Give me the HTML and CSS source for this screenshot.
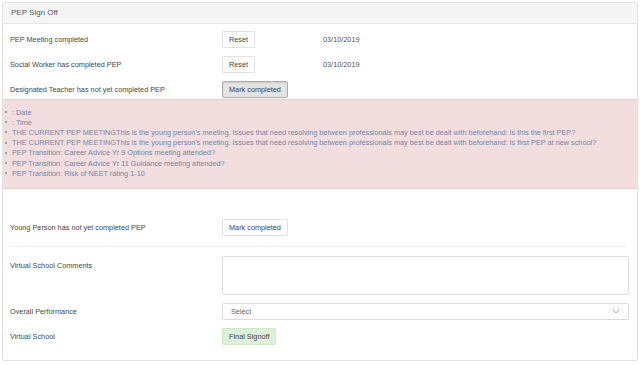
FILE: index.html
```html
<!DOCTYPE html>
<html lang="en">
<head>
  <meta charset="UTF-8" />
  <title>PEP Sign Off</title>
  <link rel="stylesheet" href="styles.css">
</head>
<body>

  <div class="panel">
    <div class="panel-heading">PEP Sign Off</div>

    <div class="panel-body">
      <div class="row">
        <div class="label">PEP Meeting completed</div>
        <div class="control"><button class="btn">Reset</button></div>
        <div class="date">03/10/2019</div>
      </div>
      <div class="row">
        <div class="label">Social Worker has completed PEP</div>
        <div class="control"><button class="btn">Reset</button></div>
        <div class="date">03/10/2019</div>
      </div>
      <div class="row">
        <div class="label">Designated Teacher has not yet completed PEP</div>
        <div class="control"><button class="btn btn-active">Mark completed</button></div>
      </div>
    </div>

    <div class="alert">
      <ul>
        <li>: Date</li>
        <li>: Time</li>
        <li>THE CURRENT PEP MEETINGThis is the young person's meeting. Issues that need resolving between professionals may best be dealt with beforehand: Is this the first PEP?</li>
        <li>THE CURRENT PEP MEETINGThis is the young person's meeting. Issues that need resolving between professionals may best be dealt with beforehand: Is first PEP at new school?</li>
        <li>PEP Transition: Career Advice Yr 9 Options meeting attended?</li>
        <li>PEP Transition: Career Advice Yr 11 Guidance meeting attended?</li>
        <li>PEP Transition: Risk of NEET rating 1-10</li>
      </ul>
    </div>

    <div class="panel-body lower">
      <div class="row">
        <div class="label">Young Person has not yet completed PEP</div>
        <div class="control"><button class="btn">Mark completed</button></div>
      </div>

      <hr>

      <div class="row row-top">
        <div class="label">Virtual School Comments</div>
        <div class="control wide"><textarea></textarea></div>
      </div>
      <div class="row">
        <div class="label">Overall Performance</div>
        <div class="control wide">
          <div class="select">
            <span>Select</span>
            <svg width="8" height="5" viewBox="0 0 8 5"><path d="M1 1l3 3 3-3" fill="none" stroke="#aaa" stroke-width="1"/></svg>
          </div>
        </div>
      </div>
      <div class="row">
        <div class="label">Virtual School</div>
        <div class="control"><button class="btn btn-success">Final Signoff</button></div>
      </div>
    </div>
  </div>

</body>
</html>
```

FILE: styles.css
```css
body {
  margin: 0;
  font-family: 'Liberation Sans', Arial, sans-serif;
  font-size: 7.3px;
  color: #484848;
  background: #fff;
}

.panel {
  margin: 2px 2px 0 2px;
  height: 359px;
  box-sizing: border-box;
  border: 1px solid #e3e3e3;
  border-radius: 2px;
}

.panel-heading {
  height: 20px;
  line-height: 20px;
  padding-left: 8px;
  font-size: 8px;
  color: #555;
  background: #f5f5f5;
  border-bottom: 1px solid #e6e6e6;
}

.panel-body {
  padding: 7px 8px 1px 7px;
  display: flex;
  flex-direction: column;
  gap: 8px;
}

.row {
  display: grid;
  grid-template-columns: 212px 101px 1fr;
  align-items: center;
  height: 17px;
}

.row-top {
  align-items: start;
  height: 39px;
}

.row-top .label {
  padding-top: 5px;
}

.control.wide {
  grid-column: 2 / 4;
}

.date {
  color: #555;
}

.btn {
  height: 17px;
  padding: 0 6px;
  font-family: inherit;
  font-size: 7.3px;
  color: #444;
  background: #fff;
  border: 1px solid #e2e2e2;
  border-radius: 2px;
}

.btn-active {
  background: #e3e3e3;
  border-color: #adadad;
  box-shadow: inset 0 1px 2px rgba(0, 0, 0, 0.1);
}

.btn-success {
  background: #dff0d8;
  border-color: #d0e9c6;
}

.alert {
  background: #f2dede;
  border-top: 1px solid #ebcccc;
  border-bottom: 1px solid #ebcccc;
  padding: 7px 0 9px 0;
  height: 72px;
  color: #7785a9;
}

.alert ul {
  margin: 0;
  padding: 0 0 0 2px;
  list-style: none;
  white-space: nowrap;
}

.alert li {
  display: flex;
  align-items: center;
  gap: 5px;
  height: 10.2px;
}

.alert li::before {
  content: "";
  width: 2px;
  height: 2px;
  border-radius: 50%;
  background: #7785a9;
}

.lower {
  padding-top: 30px;
}

hr {
  margin: 2px 0 1px 0;
  border: 0;
  border-top: 1px solid #eee;
  width: 617px;
}

textarea {
  display: block;
  width: 100%;
  height: 39px;
  box-sizing: border-box;
  border: 1px solid #ddd;
  border-radius: 2px;
  resize: none;
}

.select {
  height: 17px;
  box-sizing: border-box;
  border: 1px solid #ddd;
  border-radius: 2px;
  padding: 0 8px;
  display: flex;
  align-items: center;
  justify-content: space-between;
  color: #666;
}
```
